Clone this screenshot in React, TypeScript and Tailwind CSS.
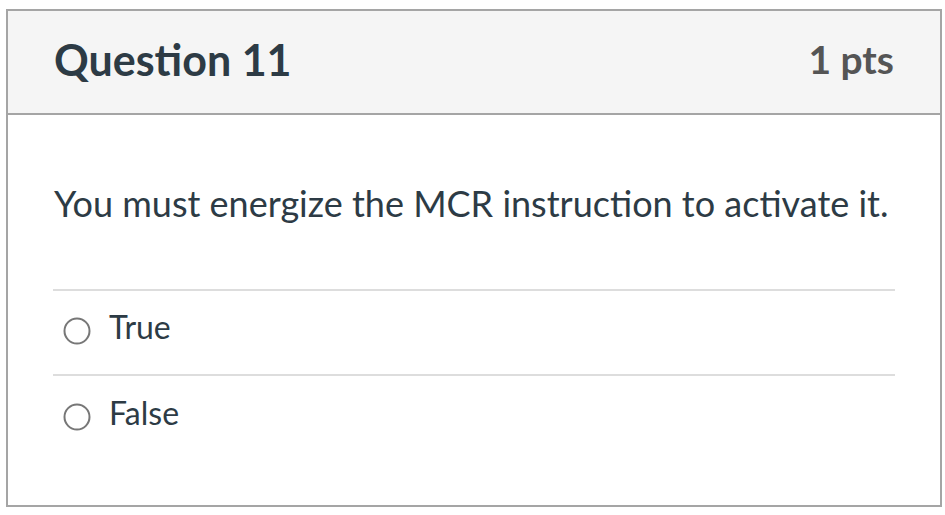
import React from 'react'

const options = ['True', 'False']

function Radio() {
  return (
    <svg width="28" height="28" viewBox="0 0 28 28" className="shrink-0">
      <circle cx="14" cy="14" r="12.5" fill="#fff" stroke="#777" strokeWidth="2" />
    </svg>
  )
}

export default function App() {
  return (
    <div className="min-h-screen bg-white pt-[9px] pl-[6px] font-['Lato',sans-serif] text-[#2d3b45]">
      <div className="w-[936px] h-[498px] border-2 border-[#a5a5a5] flex flex-col">
        <div className="h-[104px] shrink-0 bg-[#f5f5f5] border-b-2 border-[#a5a5a5] px-[46px] pb-[5px] flex items-center justify-between">
          <h2 className="text-[43px] font-bold leading-none">Question 11</h2>
          <span className="text-[39px] font-bold leading-none text-[#555555]">1 pts</span>
        </div>
        <div className="flex-1 px-[45px] pt-[68px]">
          <p className="text-[36px] leading-[40px] pl-[1px]">You must energize the MCR instruction to activate it.</p>
          <ul className="mt-[66px] border-t-2 border-[#dddddd]">
            {options.map((opt, i) => (
              <li
                key={opt}
                className={
                  'h-[85px] flex items-center gap-[18px] pl-[10px] pb-[4px] ' +
                  (i < options.length - 1 ? 'border-b-2 border-[#dddddd]' : '')
                }
              >
                <Radio />
                <span className="text-[32px] leading-none mb-[8px]">{opt}</span>
              </li>
            ))}
          </ul>
        </div>
      </div>
    </div>
  )
}
